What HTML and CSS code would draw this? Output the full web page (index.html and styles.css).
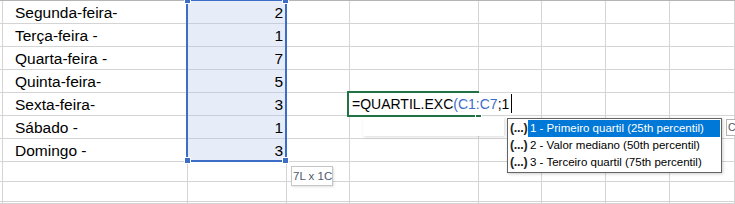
FILE: index.html
```html
<!DOCTYPE html>
<html lang="pt-BR">
<head>
  <meta charset="UTF-8">
  <title>QUARTIL.EXC</title>
  <link rel="stylesheet" href="styles.css">
</head>
<body>

  <div class="sheet">
    <div></div><div class="label">Segunda-feira-</div><div class="ref">2</div><div></div><div></div><div></div><div></div><div></div><div></div>
    <div></div><div class="label">Terça-feira -</div><div class="ref">1</div><div></div><div></div><div></div><div></div><div></div><div></div>
    <div></div><div class="label">Quarta-feira -</div><div class="ref">7</div><div></div><div></div><div></div><div></div><div></div><div></div>
    <div></div><div class="label">Quinta-feira-</div><div class="ref">5</div><div></div><div></div><div></div><div></div><div></div><div></div>
    <div></div><div class="label">Sexta-feira-</div><div class="ref">3</div><div></div><div></div><div></div><div></div><div></div><div></div>
    <div></div><div class="label">Sábado -</div><div class="ref">1</div><div></div><div></div><div></div><div></div><div></div><div></div>
    <div></div><div class="label">Domingo -</div><div class="ref">3</div><div></div><div></div><div></div><div></div><div></div><div></div>
    <div></div><div></div><div></div><div></div><div></div><div></div><div></div><div></div><div></div>
    <div></div><div></div><div></div><div></div><div></div><div></div><div></div><div></div><div></div>
    <div></div><div></div><div></div><div></div><div></div><div></div><div></div><div></div><div></div>
  </div>

  <!-- contorno azul do intervalo C1:C7 -->
  <div class="range">
    <span class="handle tl"></span>
    <span class="handle tr"></span>
    <span class="handle bl"></span>
    <span class="handle br"></span>
  </div>

  <div class="size-tip">7L x 1C</div>

  <!-- celula em edicao -->
  <div class="active-cell"><span class="fill-handle"></span></div>
  <div class="editor">=QUARTIL.EXC<span class="blue">(C1:C7</span>;1<span class="caret"></span></div>

  <div class="screentip"></div>

  <ul class="autocomplete">
    <li class="selected"><b>(...)</b><span>1 - Primeiro quartil (25th percentil)</span></li>
    <li><b>(...)</b><span>2 - Valor mediano (50th percentil)</span></li>
    <li><b>(...)</b><span>3 - Terceiro quartil (75th percentil)</span></li>
  </ul>

  <div class="side-tip">C</div>

</body>
</html>
```

FILE: styles.css
```css
body {
  margin: 0;
  width: 735px;
  height: 204px;
  overflow: hidden;
  position: relative;
  background: #fff;
  font-family: 'Liberation Sans', Arial, sans-serif;
  color: #000;
}

.sheet {
  display: grid;
  grid-template-columns: 3px 185px 99px 63px 129px 63px 64px 64px 65px;
  grid-template-rows: repeat(7, 23px) 20px 20px 2px;
  border-top: 1px solid #b4b4b4;
}

.sheet > div {
  box-sizing: border-box;
  border-right: 1px solid #d4d4d4;
  border-bottom: 1px solid #d4d4d4;
  font-size: 15.5px;
  line-height: 18px;
  display: flex;
  align-items: flex-end;
  padding-bottom: 1px;
}

.sheet .label {
  padding-left: 12px;
}

.sheet .ref {
  background: #e7edf8;
  border-bottom-color: #c8cfdb;
  justify-content: flex-end;
  padding-right: 3px;
}

.range {
  position: absolute;
  left: 186px;
  top: -1px;
  width: 101px;
  height: 163px;
  box-sizing: border-box;
  border: 2px solid #3c6ec8;
}

.handle {
  position: absolute;
  width: 5px;
  height: 5px;
  background: #3c6ec8;
  border: 1px solid #fff;
}

.handle.tl { left: -4px; top: -4px; }
.handle.tr { right: -4px; top: -4px; }
.handle.bl { left: -4px; bottom: -4px; }
.handle.br { right: -4px; bottom: -4px; }

.size-tip {
  position: absolute;
  left: 291px;
  top: 166px;
  width: 42px;
  height: 20px;
  box-sizing: border-box;
  border: 1px solid #c6c6c6;
  background: #fff;
  box-shadow: 1px 1px 2px rgba(0, 0, 0, 0.12);
  font-size: 11.5px;
  line-height: 18px;
  padding-left: 1px;
  color: #505a6a;
  white-space: nowrap;
}

.active-cell {
  position: absolute;
  left: 347px;
  top: 91px;
  width: 132px;
  height: 26px;
  box-sizing: border-box;
  border: 2px solid #217346;
  border-right: none;
}

.fill-handle {
  position: absolute;
  right: -3px;
  bottom: -4px;
  width: 5px;
  height: 5px;
  background: #217346;
  border: 1px solid #fff;
}

.editor {
  position: absolute;
  left: 349px;
  top: 93px;
  width: 191px;
  height: 22px;
  background: #fff;
  font-size: 14px;
  line-height: 22px;
  padding-left: 3px;
  box-sizing: border-box;
  white-space: nowrap;
}

.editor .blue {
  color: #3c6ec8;
}

.caret {
  display: inline-block;
  width: 1px;
  height: 19px;
  background: #000;
  vertical-align: -4px;
  margin-left: 2px;
}

.screentip {
  position: absolute;
  left: 363px;
  top: 117px;
  width: 141px;
  height: 19px;
  background: #fff;
  box-shadow: 1px 1px 3px rgba(0, 0, 0, 0.15);
}

.autocomplete {
  position: absolute;
  left: 507px;
  top: 118px;
  width: 215px;
  margin: 0;
  padding: 1px;
  list-style: none;
  box-sizing: border-box;
  background: #fff;
  border: 1px solid #646464;
  box-shadow: 1px 1px 3px rgba(0, 0, 0, 0.2);
  font-size: 11.5px;
}

.autocomplete li {
  display: flex;
  height: 17px;
  line-height: 17px;
  white-space: nowrap;
}

.autocomplete b {
  width: 18px;
  padding-left: 1px;
  font-size: 12.5px;
  letter-spacing: -0.3px;
  color: #222;
}

.autocomplete li span {
  flex: 1;
  padding-left: 2px;
}

.autocomplete li.selected span {
  background: #0078d7;
  color: #fff;
}

.side-tip {
  position: absolute;
  left: 726px;
  top: 119px;
  width: 40px;
  height: 17px;
  box-sizing: border-box;
  border: 1px solid #b4b4b4;
  background: #fff;
  font-size: 10.5px;
  line-height: 15px;
  padding-left: 1px;
  color: #555;
}
```
